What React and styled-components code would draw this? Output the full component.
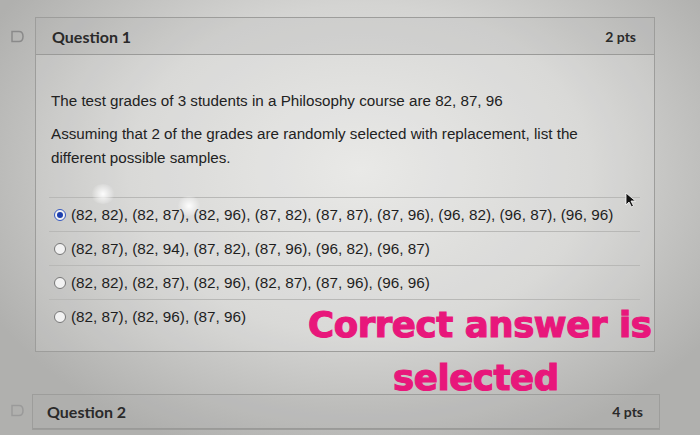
import styled, { createGlobalStyle } from "styled-components";

const Global = createGlobalStyle`
  html, body {
    margin: 0;
    padding: 0;
  }
  body {
    width: 700px;
    height: 435px;
    overflow: hidden;
    font-family: "Liberation Sans", Arial, sans-serif;
    background: radial-gradient(ellipse 420px 300px at 360px 170px, #e6e6e4 0%, #d4d4d2 55%, #b0b0ae 100%);
  }
`;

const Page = styled.div`
  position: relative;
  width: 700px;
  height: 435px;
  padding: 17px 45px 0 8px;
  box-sizing: border-box;
  display: flex;
  flex-direction: column;
  gap: 42px;
`;

const QuestionRow = styled.div`
  display: flex;
  align-items: flex-start;
  gap: ${(p) => p.$gap}px;
  margin-right: ${(p) => p.$right}px;
`;

const Flag = styled.div`
  width: 19px;
  padding-top: ${(p) => p.$top}px;
  display: flex;
  justify-content: center;
`;

const Card = styled.div`
  flex: 1;
  border: 1px solid #9d9d9b;
  background: rgba(255, 255, 255, 0.12);
`;

const Header = styled.div`
  height: ${(p) => p.$h}px;
  display: flex;
  align-items: center;
  justify-content: space-between;
  padding: 0 ${(p) => p.$padR}px 0 ${(p) => p.$padL}px;
  background: rgba(0, 0, 0, 0.05);
  border-bottom: 1px solid #9a9a98;
  font-family: Lato, "Liberation Sans", sans-serif;
  font-weight: 700;
  color: #2a2a2a;
`;

const Title = styled.span`
  font-size: 16px;
`;

const Points = styled.span`
  font-size: 14px;
`;

const Body = styled.div`
  padding: 34px 14px 18px 13px;
  color: #222;
  font-size: 15.2px;
`;

const Para = styled.p`
  margin: 0 0 9px;
  line-height: 24px;
  padding-left: 2px;
`;

const Answers = styled.div`
  margin-top: 27px;
  border-top: 1px solid #b8b8b6;
`;

const Answer = styled.div`
  height: 33px;
  display: flex;
  align-items: center;
  gap: 5px;
  padding-left: 5px;
  font-size: 15.3px;
  color: #1e1e1e;
  border-bottom: ${(p) => (p.$last ? "none" : "1px solid #b8b8b6")};
`;

const Radio = styled.span`
  width: 10px;
  height: 10px;
  border-radius: 50%;
  border: 1px solid ${(p) => (p.$checked ? "#3558c0" : "#777")};
  background: #f2f2f2;
  display: inline-flex;
  align-items: center;
  justify-content: center;
  flex-shrink: 0;
  &::after {
    content: "";
    width: 6px;
    height: 6px;
    border-radius: 50%;
    background: ${(p) => (p.$checked ? "#1d3fae" : "transparent")};
  }
`;

const Overlay = styled.div`
  position: absolute;
  left: ${(p) => p.$x}px;
  top: ${(p) => p.$y}px;
  font-family: "DejaVu Sans", "Liberation Sans", sans-serif;
  font-weight: 700;
  font-size: 35.5px;
  letter-spacing: -0.4px;
  color: #e8177b;
  white-space: nowrap;
  -webkit-text-stroke: 1.2px #e8177b;
`;

const Glare = styled.div`
  position: absolute;
  left: ${(p) => p.$x}px;
  top: ${(p) => p.$y}px;
  width: 26px;
  height: 20px;
  border-radius: 50%;
  background: radial-gradient(circle, rgba(255, 255, 255, 0.95) 0%, rgba(255, 255, 255, 0) 70%);
`;

const Cursor = styled.svg`
  position: absolute;
  left: 625px;
  top: 192px;
`;

function FlagIcon({ color }) {
  return (
    <svg width="15" height="13" viewBox="0 0 15 13">
      <path d="M2 1.5 H9 Q13 1.5 13 6.5 Q13 11.5 9 11.5 H2 Z" fill="none" stroke={color} strokeWidth="1.5" />
    </svg>
  );
}

const answers = [
  "(82, 82), (82, 87), (82, 96), (87, 82), (87, 87), (87, 96), (96, 82), (96, 87), (96, 96)",
  "(82, 87), (82, 94), (87, 82), (87, 96), (96, 82), (96, 87)",
  "(82, 82), (82, 87), (82, 96), (82, 87), (87, 96), (96, 96)",
  "(82, 87), (82, 96), (87, 96)",
];

export default function App() {
  return (
    <>
      <Global />
      <Page>
        <QuestionRow $gap={8} $right={0}>
          <Flag $top={13}>
            <FlagIcon color="#8a8a8a" />
          </Flag>
          <Card>
            <Header $h={36} $padL={16} $padR={18}>
              <Title>Question 1</Title>
              <Points>2 pts</Points>
            </Header>
            <Body>
              <Para>The test grades of 3 students in a Philosophy course are 82, 87, 96</Para>
              <Para>
                Assuming that 2 of the grades are randomly selected with replacement, list the
                <br />
                different possible samples.
              </Para>
              <Answers>
                {answers.map((a, i) => (
                  <Answer key={i} $last={i === answers.length - 1}>
                    <Radio $checked={i === 0} />
                    <span>{a}</span>
                  </Answer>
                ))}
              </Answers>
            </Body>
          </Card>
        </QuestionRow>
        <QuestionRow $gap={5} $right={-5}>
          <Flag $top={10}>
            <FlagIcon color="#9a9a9a" />
          </Flag>
          <Card>
            <Header $h={33} $padL={14} $padR={16}>
              <Title>Question 2</Title>
              <Points>4 pts</Points>
            </Header>
          </Card>
        </QuestionRow>
        <Overlay $x={308} $y={304}>Correct answer is</Overlay>
        <Overlay $x={393} $y={357}>selected</Overlay>
        <Glare $x={90} $y={184} />
        <Glare $x={176} $y={196} />
        <Cursor width="12" height="16" viewBox="0 0 12 16">
          <path d="M1 1 L1 13 L4 10 L6.5 15 L8.5 14 L6 9 L10.5 9 Z" fill="#111" stroke="#fff" strokeWidth="0.8" />
        </Cursor>
      </Page>
    </>
  );
}
